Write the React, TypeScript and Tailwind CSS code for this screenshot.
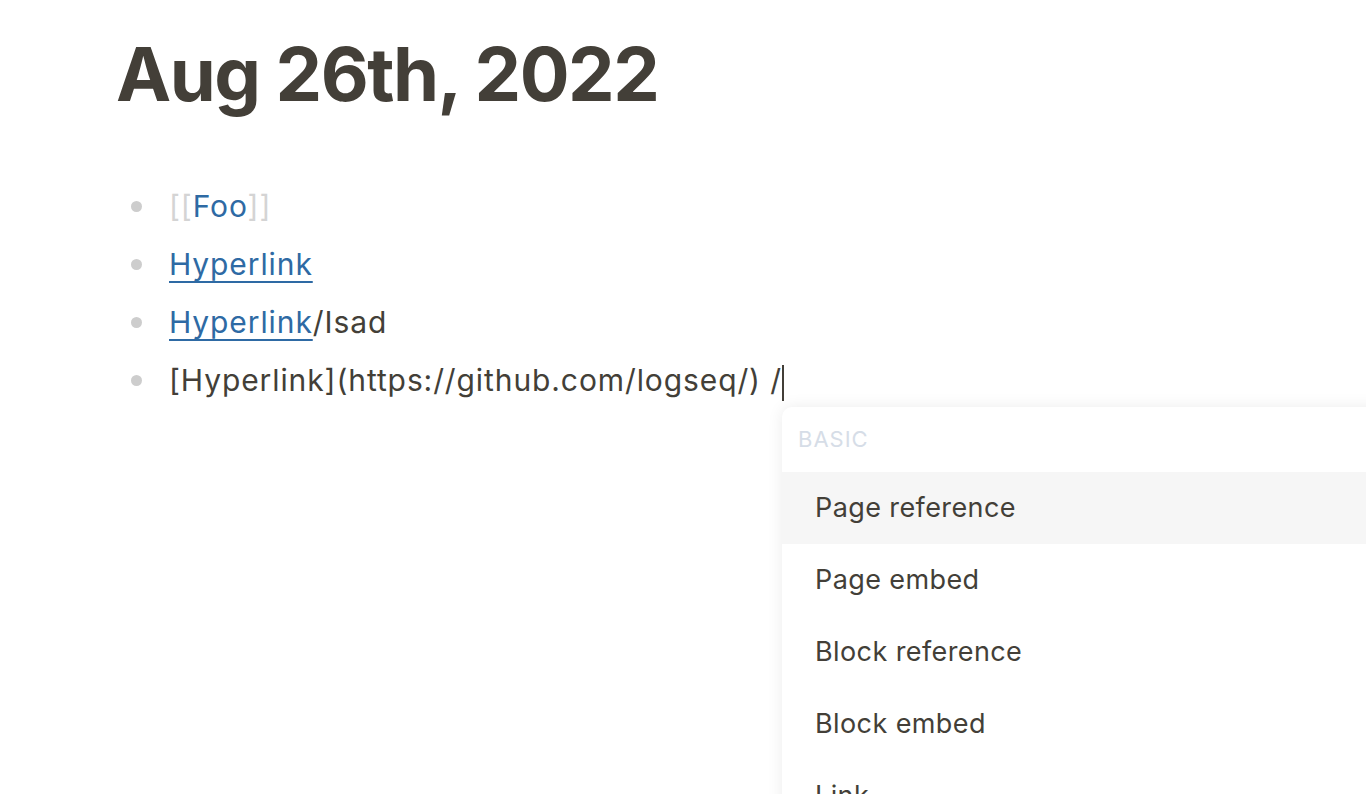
import React from "react";

function Bullet({ children }: { children: React.ReactNode }) {
  return (
    <div className="flex items-center h-[58px]">
      <div className="w-[52px] flex items-center">
        <span className="ml-[14px] w-[11px] h-[11px] rounded-full bg-[#cdcdcd]" />
      </div>
      <div className="text-[30px] tracking-[0.9px] text-[#433f38] leading-[58px] whitespace-nowrap">{children}</div>
    </div>
  );
}

function Link({ children }: { children: React.ReactNode }) {
  return (
    <span className="text-[#2e6aa4] underline decoration-[2px] underline-offset-[6px] decoration-[#2e6aa4]">
      {children}
    </span>
  );
}

export default function App() {
  const items = ["Page reference", "Page embed", "Block reference", "Block embed", "Link"];
  return (
    <div
      className="relative w-[1366px] h-[794px] overflow-hidden bg-white"
      style={{ fontFamily: "Inter, 'Noto Sans', sans-serif" }}
    >
      <div className="pl-[116px] pt-[24px]">
        <h1 className="text-[74px] font-bold text-[#433f38] leading-[100px] tracking-[-1.5px] m-0">
          Aug 26th, 2022
        </h1>
      </div>
      <div className="pl-[117px] pt-[53px] flex flex-col">
        <Bullet>
          <span className="text-[#d4d4d4]">[[</span>
          <span className="text-[#2e6aa4]">Foo</span>
          <span className="text-[#d4d4d4]">]]</span>
        </Bullet>
        <Bullet>
          <Link>Hyperlink</Link>
        </Bullet>
        <Bullet>
          <Link>Hyperlink</Link>/Isad
        </Bullet>
        <Bullet>
          <span>[Hyperlink](https://github.com/logseq/) /</span>
          <span className="inline-block w-[2px] h-[36px] bg-[#433f38] align-middle" />
        </Bullet>
      </div>
      <div className="absolute left-[782px] top-[407px] w-[640px] h-[420px] bg-white rounded-tl-[10px] shadow-[0_0_16px_rgba(0,0,0,0.08)]">
        <div className="h-[65px] pl-[16px] flex items-center text-[22px] text-[#d6dde7] tracking-[1px]">
          BASIC
        </div>
        {items.map((it, i) => (
          <div
            key={it}
            className={`h-[72px] pl-[33px] flex items-center text-[27px] tracking-[0.4px] text-[#433f38] ${i === 0 ? "bg-[#f6f6f6]" : ""}`}
          >
            {it}
          </div>
        ))}
      </div>
    </div>
  );
}
